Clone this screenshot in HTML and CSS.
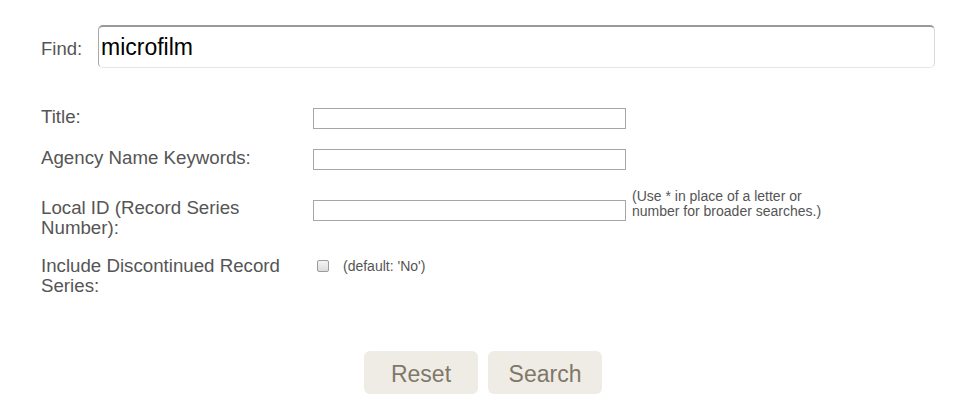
FILE: index.html
```html
<!DOCTYPE html>
<html lang="en">
<head>
<meta charset="utf-8">
<title>Search</title>
<link rel="stylesheet" href="styles.css">
</head>
<body>
<form class="page">
  <div class="find-row">
    <label class="find-label" for="find">Find:</label>
    <input class="find-input" id="find" type="text" value="microfilm">
  </div>

  <div class="row row-title">
    <label class="label" for="title">Title:</label>
    <div class="field"><input class="text-input" id="title" type="text"></div>
  </div>

  <div class="row row-agency">
    <label class="label" for="agency">Agency Name Keywords:</label>
    <div class="field"><input class="text-input" id="agency" type="text"></div>
  </div>

  <div class="row row-local">
    <label class="label label-local" for="localid">Local ID (Record Series Number):</label>
    <div class="field">
      <input class="text-input input-local" id="localid" type="text">
      <span class="hint"><span class="hint-line">(Use * in place of a letter or</span><span class="hint-line">number for broader searches.)</span></span>
    </div>
  </div>

  <div class="row row-include">
    <label class="label" for="disc">Include Discontinued Record Series:</label>
    <div class="field field-check">
      <input class="check" id="disc" type="checkbox">
      <span class="note">(default: 'No')</span>
    </div>
  </div>

  <div class="buttons">
    <button class="btn" type="reset">Reset</button>
    <button class="btn" type="button">Search</button>
  </div>
</form>
</body>
</html>
```

FILE: styles.css
```css
html, body {
  margin: 0;
  padding: 0;
  background: #ffffff;
}

body {
  font-family: "Liberation Sans", Arial, sans-serif;
  color: #555555;
}

.page {
  padding: 25px 35px 0 41px;
}

.find-row {
  display: flex;
  align-items: flex-start;
  height: 43px;
}

.find-label {
  font-size: 18.5px;
  line-height: 20px;
  margin-top: 14px;
  width: 57px;
  flex-shrink: 0;
}

.find-input {
  box-sizing: border-box;
  flex: 1;
  height: 43px;
  margin: 0;
  padding: 0 0 0 2px;
  font-family: "Liberation Sans", Arial, sans-serif;
  font-size: 23px;
  color: #000000;
  background: #ffffff;
  border: 1px solid #e6e6e6;
  border-top: 2px solid #9a9a9a;
  border-left-color: #a8a8a8;
  border-right-color: #d8d8d8;
  border-radius: 5px;
  outline: none;
}

.row {
  display: flex;
  align-items: flex-start;
}

.row-title { margin-top: 39px; }
.row-agency { margin-top: 19px; }
.row-local { margin-top: 19px; }
.row-include { margin-top: 18px; }

.label {
  width: 272px;
  flex-shrink: 0;
  font-size: 18.7px;
  line-height: 20px;
  padding-right: 20px;
  box-sizing: border-box;
}

.field {
  display: flex;
  align-items: flex-start;
}

.text-input {
  box-sizing: border-box;
  width: 313px;
  height: 21px;
  margin: 1px 0 0 0;
  padding: 0 2px;
  border: 1px solid #a6a6a6;
  border-radius: 0;
  background: #ffffff;
  font-family: "Liberation Sans", Arial, sans-serif;
  font-size: 14px;
  outline: none;
}

.label-local { margin-top: 9px; }
.input-local { margin-top: 11px; }

.hint {
  display: flex;
  flex-direction: column;
  margin-left: 6px;
  margin-top: 0;
  font-size: 14px;
  color: #555555;
}

.hint-line {
  display: block;
  line-height: 15px;
  white-space: nowrap;
}

.field-check {
  align-items: center;
  margin-top: 3px;
}

.check {
  appearance: none;
  -webkit-appearance: none;
  box-sizing: border-box;
  width: 12px;
  height: 12px;
  margin: 0 0 0 4px;
  border: 1px solid #9c9c9c;
  border-radius: 2px;
  background: linear-gradient(#f4f4f4, #dcdcdc);
}

.note {
  margin-left: 14px;
  font-size: 14px;
  line-height: 12px;
  padding-top: 1px;
  color: #555555;
}

.buttons {
  display: flex;
  justify-content: flex-start;
  gap: 10px;
  margin-top: 55px;
  padding-left: 323px;
}

.btn {
  box-sizing: border-box;
  width: 114px;
  height: 43px;
  margin: 0;
  padding: 3px 0 0 0;
  border: none;
  border-radius: 6px;
  background: #efece6;
  color: #7f7869;
  font-family: "Liberation Sans", Arial, sans-serif;
  font-size: 23px;
  cursor: pointer;
}
```
